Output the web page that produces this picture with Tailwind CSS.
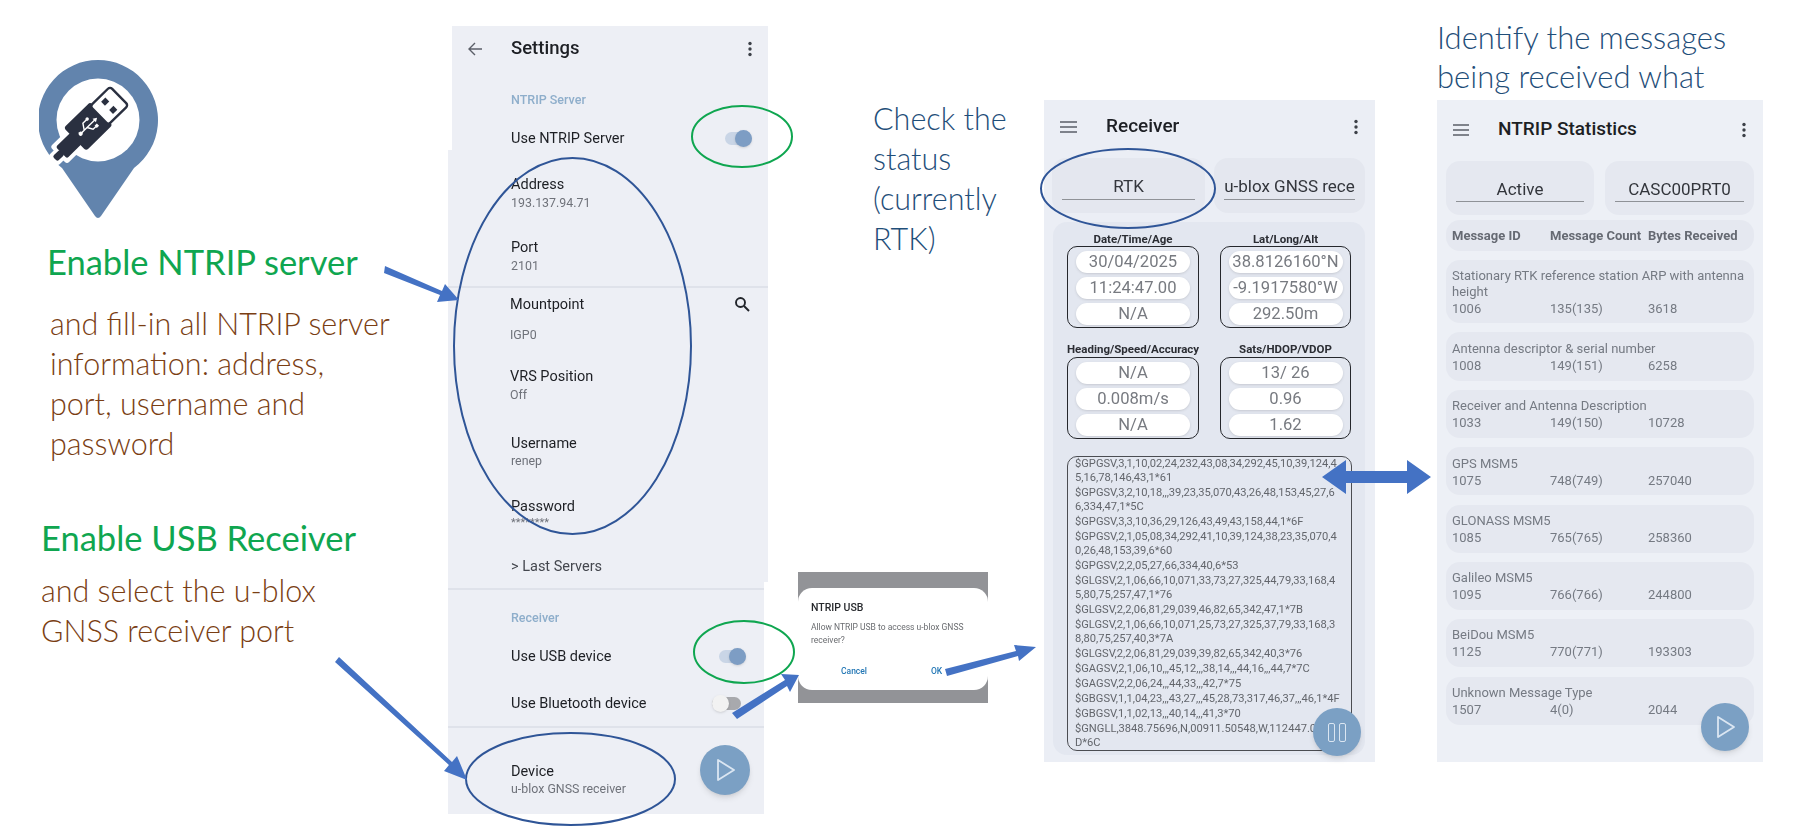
<!DOCTYPE html>
<html>
<head>
<meta charset="utf-8">
<script src="https://cdn.jsdelivr.net/npm/@tailwindcss/browser@4"></script>
</head>
<body class="bg-white">
<div class="relative w-[1794px] h-[830px] overflow-hidden bg-white font-[Roboto]">

  <!-- Logo -->
  <svg class="absolute left-[39px] top-[58px] w-[120px] h-[162px]" viewBox="39 58 120 162">
    <path d="M62 168 A60 60 0 1 1 134 168 L101 216 Q98 220 95 216 Z" fill="#6284ad"/>
    <circle cx="98" cy="120" r="41.5" fill="#fff"/>
    <g transform="translate(55 159) rotate(-44.5)">
      <path d="M0 -4 H10 V4 H0 Z M8 -9 H30 V9 H8 Z" fill="#fff" stroke="#fff" stroke-width="6" stroke-linejoin="round"/>
      <rect x="0" y="-3.5" width="10" height="7" rx="2" fill="#2a3040"/>
      <rect x="9" y="-8" width="21" height="16" rx="2" fill="#2a3040"/>
      <rect x="28" y="-16" width="37" height="32" rx="3" fill="#2a3040"/>
      <rect x="62" y="-13" width="28" height="26" rx="3" fill="#fff" stroke="#2a3040" stroke-width="2.4"/>
      <rect x="73" y="-8.5" width="6" height="5.5" fill="#2a3040"/>
      <rect x="73" y="3" width="6" height="5.5" fill="#2a3040"/>
      <g stroke="#fff" stroke-width="1.4" fill="none">
        <path d="M36 0 H56 M41 0 L45 -6 H50 M45 0 L48 5.5 H52"/>
      </g>
      <circle cx="36" cy="0" r="2.1" fill="#fff"/>
      <circle cx="51" cy="-6" r="1.7" fill="#fff"/>
      <rect x="51.5" y="4" width="3.2" height="3.2" fill="#fff"/>
      <path d="M55 -2.4 L59 0 L55 2.4 Z" fill="#fff"/>
    </g>
  </svg>

  <!-- Annotations -->
  <div class="absolute left-[47px] top-[240px] font-[Lato] text-[#0fa650] text-[34.5px] leading-[44px] whitespace-nowrap">Enable NTRIP server</div>
  <div class="absolute left-[50px] top-[303px] font-[Lato] font-light text-[#7a3e13] text-[30.5px] leading-[40px] whitespace-nowrap">and fill-in all NTRIP server<br>information: address,<br>port, username and<br>password</div>
  <div class="absolute left-[41px] top-[516px] font-[Lato] text-[#0fa650] text-[34.5px] leading-[44px] whitespace-nowrap">Enable USB Receiver</div>
  <div class="absolute left-[41px] top-[570px] font-[Lato] font-light text-[#7a3e13] text-[30.5px] leading-[40px] whitespace-nowrap">and select the u-blox<br>GNSS receiver port</div>
  <div class="absolute left-[873px] top-[98px] font-[Lato] font-light text-[#1f4e79] text-[30.5px] leading-[40px] whitespace-nowrap">Check the<br>status<br>(currently<br>RTK)</div>
  <div class="absolute left-[1437px] top-[18px] font-[Lato] font-light text-[#1f4e79] text-[31px] leading-[39px] whitespace-nowrap">Identify the messages<br>being received what</div>

  <!-- Settings screenshot -->
  <div class="absolute left-[448px] top-[26px] w-[320px] text-[#1d1f24] blur-[0.3px]">
    <div class="ml-[4px] h-[124px] bg-[#edeff5]">
      <div class="h-[45px] flex items-center justify-between pl-[15px] pr-[15px]">
        <div class="flex items-center">
          <svg class="w-[16px] h-[16px]" viewBox="0 0 16 16" fill="none" stroke="#5b5f68" stroke-width="1.4"><path d="M15 8 H2 M8 2 L2 8 L8 14"/></svg>
          <span class="ml-[28px] text-[18.5px] font-medium">Settings</span>
        </div>
        <svg class="w-[6px] h-[16px]" viewBox="0 0 6 16" fill="#3c4048"><circle cx="3" cy="2.5" r="1.7"/><circle cx="3" cy="8" r="1.7"/><circle cx="3" cy="13.5" r="1.7"/></svg>
      </div>
      <div class="mt-[20px] h-[18px] pl-[59px] text-[12.5px] leading-[18px] font-medium text-[#8eaecb]">NTRIP Server</div>
      <div class="mt-[20px] h-[18px] pl-[59px] pr-[16px] flex items-center justify-between text-[14.5px] leading-[20px]">
        <span class="pt-[2px]">Use NTRIP Server</span>
        <span class="relative block w-[27px] h-[13px] rounded-full bg-[#c9d5e6]"><span class="absolute right-0 top-[-2px] block w-[17px] h-[17px] rounded-full bg-[#7d9dc4] shadow-sm"></span></span>
      </div>
    </div>
    <div class="h-[432px] bg-[#edeff5] pl-[63px] pt-[25px]">
      <div class="h-[18px] text-[14.5px] leading-[20px]">Address</div>
      <div class="mt-[1px] h-[18px] text-[12.4px] leading-[18px] text-[#6f727a]">193.137.94.71</div>
      <div class="mt-[26px] h-[18px] text-[14.5px] leading-[20px]">Port</div>
      <div class="mt-[1px] h-[18px] text-[12.4px] leading-[18px] text-[#6f727a]">2101</div>
      <div class="mt-[11px] -ml-[63px] h-[2px] bg-[#dfe2ea]"></div>
      <div class="mt-[7px] -ml-[1px] pr-[18px] h-[18px] flex items-center justify-between text-[14.5px] leading-[20px]">
        <span class="pt-[2px]">Mountpoint</span>
        <svg class="w-[16px] h-[16px]" viewBox="0 0 16 16" fill="none" stroke="#22252b" stroke-width="1.9"><circle cx="6.5" cy="6.5" r="4.5"/><path d="M10 10 L15 15"/></svg>
      </div>
      <div class="mt-[13px] -ml-[1px] h-[18px] text-[12.4px] leading-[18px] text-[#6f727a]">IGP0</div>
      <div class="mt-[23px] -ml-[1px] h-[18px] text-[14.5px] leading-[20px]">VRS Position</div>
      <div class="mt-[1px] -ml-[1px] h-[18px] text-[12.4px] leading-[18px] text-[#6f727a]">Off</div>
      <div class="mt-[30px] h-[18px] text-[14.5px] leading-[20px]">Username</div>
      <div class="h-[18px] text-[12.4px] leading-[18px] text-[#6f727a]">renep</div>
      <div class="mt-[27px] h-[18px] text-[14.5px] leading-[20px]">Password</div>
      <div class="h-[16px] text-[11px] leading-[16px] text-[#6f727a]">********</div>
      <div class="mt-[26px] h-[18px] text-[14.5px] leading-[20px] text-[#44474e]">&gt; Last Servers</div>
    </div>
    <div class="relative w-[316px] h-[232px] bg-[#edeff5] pt-[6px]">
      <div class="h-[2px] bg-[#dfe2ea]"></div>
      <div class="mt-[18px] ml-[63px] h-[18px] text-[12.5px] leading-[20px] font-medium text-[#8eaecb]">Receiver</div>
      <div class="mt-[21px] pl-[63px] pr-[16px] h-[18px] flex items-center justify-between text-[14.5px] leading-[20px]">
        <span class="pt-[2px]">Use USB device</span>
        <span class="relative block w-[27px] h-[13px] mr-[2px] rounded-full bg-[#c9d5e6]"><span class="absolute right-0 top-[-2px] block w-[17px] h-[17px] rounded-full bg-[#7d9dc4] shadow-sm"></span></span>
      </div>
      <div class="mt-[29px] pl-[63px] pr-[16px] h-[18px] flex items-center justify-between text-[14.5px] leading-[20px]">
        <span class="pt-[2px]">Use Bluetooth device</span>
        <span class="relative block w-[29px] h-[13px] mr-[7px] rounded-full bg-[#a8a9ad]"><span class="absolute left-0 top-[-2px] block w-[17px] h-[17px] rounded-full bg-[#f2f2f2] shadow-sm"></span></span>
      </div>
      <div class="mt-[14px] h-[2px] bg-[#dfe2ea]"></div>
      <div class="mt-[34px] ml-[63px] h-[18px] text-[14.5px] leading-[20px]">Device</div>
      <div class="ml-[63px] h-[18px] text-[12.4px] leading-[18px] text-[#6f727a]">u-blox GNSS receiver</div>
      <div class="absolute left-[252px] top-[163px] w-[50px] h-[50px] rounded-full bg-[#7ba0c4] shadow-md flex items-center justify-center">
        <svg class="w-[20px] h-[24px] ml-[1px]" viewBox="0 0 20 24" fill="none" stroke="#dbe6f2" stroke-width="1.8"><path d="M2 2 L18 12 L2 22 Z" stroke-linejoin="round"/></svg>
      </div>
    </div>
  </div>

  <!-- USB permission dialog -->
  <div class="absolute left-[798px] top-[572px] w-[190px] h-[131px] bg-[#929397] pt-[16px] blur-[0.3px]">
    <div class="h-[102px] bg-white rounded-[14px] pl-[13px] pt-[12px]">
      <div class="text-[10.5px] leading-[16px] font-medium text-[#26282c]">NTRIP USB</div>
      <div class="mt-[5px] text-[8.5px] leading-[13px] text-[#6a6c70]">Allow NTRIP USB to access u-blox GNSS<br>receiver?</div>
      <div class="mt-[18px] flex text-[8.5px] leading-[12px] font-medium text-[#2377b5]">
        <span class="ml-[30px] w-[90px]">Cancel</span>
        <span>OK</span>
      </div>
    </div>
  </div>

  <!-- Receiver screenshot -->
  <div class="absolute left-[1044px] top-[100px] w-[331px] h-[662px] bg-[#ebeef5] blur-[0.3px]">
    <div class="h-[53px] flex items-center justify-between pl-[16px] pr-[16px]">
      <div class="flex items-center">
        <svg class="w-[17px] h-[12px]" viewBox="0 0 17 12" stroke="#5b5f68" stroke-width="1.3"><path d="M0 1 H17 M0 6 H17 M0 11 H17"/></svg>
        <span class="ml-[29px] text-[19px] font-medium text-[#1d1f24]">Receiver</span>
      </div>
      <svg class="w-[6px] h-[16px]" viewBox="0 0 6 16" fill="#3c4048"><circle cx="3" cy="2.5" r="1.7"/><circle cx="3" cy="8" r="1.7"/><circle cx="3" cy="13.5" r="1.7"/></svg>
    </div>
    <div class="mt-[5px] pl-[8px] flex gap-[9px]">
      <div class="w-[153px] h-[55px] rounded-[14px] bg-[#e4e7ef] pt-[17px] px-[10px]">
        <div class="h-[24px] border-b border-[#8f9297] box-content text-center text-[17px] leading-[22px] text-[#33363c]">RTK</div>
      </div>
      <div class="w-[151px] h-[55px] rounded-[14px] bg-[#e4e7ef] pt-[17px] px-[10px]">
        <div class="h-[24px] border-b border-[#8f9297] box-content text-center text-[17px] leading-[22px] text-[#33363c] whitespace-nowrap overflow-hidden">u-blox GNSS rece</div>
      </div>
    </div>
    <div class="mt-[9px] ml-[9px] w-[312px] h-[533px] rounded-[14px] bg-[#e3e7f0] pl-[14px] pt-[10px]">
      <div class="grid grid-cols-[132px_131px] gap-x-[21px]">
        <div>
          <div class="h-[14px] text-center text-[11.5px] leading-[15px] font-bold text-[#2b2d33]">Date/Time/Age</div>
          <div class="h-[82px] border border-[#25272c] rounded-[10px] pt-[4px] flex flex-col items-center gap-[4px]">
            <div class="w-[114px] h-[22px] rounded-full bg-white shadow-sm text-center text-[16.6px] leading-[22px] text-[#777a80]">30/04/2025</div>
            <div class="w-[114px] h-[22px] rounded-full bg-white shadow-sm text-center text-[16.6px] leading-[22px] text-[#777a80]">11:24:47.00</div>
            <div class="w-[114px] h-[22px] rounded-full bg-white shadow-sm text-center text-[16.6px] leading-[22px] text-[#777a80]">N/A</div>
          </div>
        </div>
        <div>
          <div class="h-[14px] text-center text-[11.5px] leading-[15px] font-bold text-[#2b2d33]">Lat/Long/Alt</div>
          <div class="h-[82px] border border-[#25272c] rounded-[10px] pt-[4px] flex flex-col items-center gap-[4px]">
            <div class="w-[114px] h-[22px] rounded-full bg-white shadow-sm text-center text-[16.6px] leading-[22px] text-[#777a80] whitespace-nowrap">38.8126160°N</div>
            <div class="w-[114px] h-[22px] rounded-full bg-white shadow-sm text-center text-[16.6px] leading-[22px] text-[#777a80] whitespace-nowrap">-9.1917580°W</div>
            <div class="w-[114px] h-[22px] rounded-full bg-white shadow-sm text-center text-[16.6px] leading-[22px] text-[#777a80]">292.50m</div>
          </div>
        </div>
      </div>
      <div class="mt-[14px] grid grid-cols-[132px_131px] gap-x-[21px]">
        <div>
          <div class="h-[15px] text-center text-[11.5px] leading-[15px] font-bold text-[#2b2d33] whitespace-nowrap">Heading/Speed/Accuracy</div>
          <div class="h-[82px] border border-[#25272c] rounded-[10px] pt-[4px] flex flex-col items-center gap-[4px]">
            <div class="w-[114px] h-[22px] rounded-full bg-white shadow-sm text-center text-[16.6px] leading-[22px] text-[#777a80]">N/A</div>
            <div class="w-[114px] h-[22px] rounded-full bg-white shadow-sm text-center text-[16.6px] leading-[22px] text-[#777a80]">0.008m/s</div>
            <div class="w-[114px] h-[22px] rounded-full bg-white shadow-sm text-center text-[16.6px] leading-[22px] text-[#777a80]">N/A</div>
          </div>
        </div>
        <div>
          <div class="h-[15px] text-center text-[11.5px] leading-[15px] font-bold text-[#2b2d33]">Sats/HDOP/VDOP</div>
          <div class="h-[82px] border border-[#25272c] rounded-[10px] pt-[4px] flex flex-col items-center gap-[4px]">
            <div class="w-[114px] h-[22px] rounded-full bg-white shadow-sm text-center text-[16.6px] leading-[22px] text-[#777a80]">13/ 26</div>
            <div class="w-[114px] h-[22px] rounded-full bg-white shadow-sm text-center text-[16.6px] leading-[22px] text-[#777a80]">0.96</div>
            <div class="w-[114px] h-[22px] rounded-full bg-white shadow-sm text-center text-[16.6px] leading-[22px] text-[#777a80]">1.62</div>
          </div>
        </div>
      </div>
      <div class="mt-[17px] w-[285px] h-[295px] border border-[#4b4d52] rounded-[10px] overflow-hidden pl-[7px] text-[11.15px] leading-[14px] text-[#63666c] whitespace-nowrap flex flex-col gap-[1px]">
        <p>$GPGSV,3,1,10,02,24,232,43,08,34,292,45,10,39,124,4<br>5,16,78,146,43,1*61</p>
        <p>$GPGSV,3,2,10,18,,,39,23,35,070,43,26,48,153,45,27,6<br>6,334,47,1*5C</p>
        <p>$GPGSV,3,3,10,36,29,126,43,49,43,158,44,1*6F</p>
        <p>$GPGSV,2,1,05,08,34,292,41,10,39,124,38,23,35,070,4<br>0,26,48,153,39,6*60</p>
        <p>$GPGSV,2,2,05,27,66,334,40,6*53</p>
        <p>$GLGSV,2,1,06,66,10,071,33,73,27,325,44,79,33,168,4<br>5,80,75,257,47,1*76</p>
        <p>$GLGSV,2,2,06,81,29,039,46,82,65,342,47,1*7B</p>
        <p>$GLGSV,2,1,06,66,10,071,25,73,27,325,37,79,33,168,3<br>8,80,75,257,40,3*7A</p>
        <p>$GLGSV,2,2,06,81,29,039,39,82,65,342,40,3*76</p>
        <p>$GAGSV,2,1,06,10,,,45,12,,,38,14,,,44,16,,,44,7*7C</p>
        <p>$GAGSV,2,2,06,24,,,44,33,,,42,7*75</p>
        <p>$GBGSV,1,1,04,23,,,43,27,,,45,28,73,317,46,37,,,46,1*4F</p>
        <p>$GBGSV,1,1,02,13,,,40,14,,,41,3*70</p>
        <p>$GNGLL,3848.75696,N,00911.50548,W,112447.00,A,<br>D*6C</p>
      </div>
    </div>
    <div class="absolute left-[269px] top-[608px] w-[48px] h-[48px] rounded-full bg-[#7ba0c4] shadow-md flex items-center justify-center gap-[4px]">
      <span class="block w-[7px] h-[19px] border-[1.5px] border-[#dbe6f2] rounded-[2px]"></span>
      <span class="block w-[7px] h-[19px] border-[1.5px] border-[#dbe6f2] rounded-[2px]"></span>
    </div>
  </div>

  <!-- NTRIP Statistics screenshot -->
  <div class="absolute left-[1437px] top-[100px] w-[326px] h-[662px] bg-[#edf0f6] blur-[0.3px]">
    <div class="h-[59px] flex items-center justify-between pl-[16px] pr-[16px]">
      <div class="flex items-center">
        <svg class="w-[16px] h-[12px]" viewBox="0 0 16 12" stroke="#5b5f68" stroke-width="1.3"><path d="M0 1 H16 M0 6 H16 M0 11 H16"/></svg>
        <span class="ml-[29px] text-[19px] font-medium text-[#1d1f24]">NTRIP Statistics</span>
      </div>
      <svg class="w-[6px] h-[16px]" viewBox="0 0 6 16" fill="#3c4048"><circle cx="3" cy="2.5" r="1.7"/><circle cx="3" cy="8" r="1.7"/><circle cx="3" cy="13.5" r="1.7"/></svg>
    </div>
    <div class="mt-[2px] pl-[9px] flex gap-[11px]">
      <div class="w-[148px] h-[54px] rounded-[14px] bg-[#e5e8f0] pt-[16px] px-[10px]">
        <div class="h-[24px] border-b border-[#8f9297] box-content text-center text-[17px] leading-[24px] text-[#33363c]">Active</div>
      </div>
      <div class="w-[149px] h-[54px] rounded-[14px] bg-[#e5e8f0] pt-[16px] px-[10px]">
        <div class="h-[24px] border-b border-[#8f9297] box-content text-center text-[17px] leading-[24px] text-[#33363c]">CASC00PRT0</div>
      </div>
    </div>
    <div class="mx-[9px] mt-[5px] flex flex-col text-[13px] text-[#757a83]">
      <div class="h-[31px] rounded-[14px] bg-[#e5e8f0] pl-[6px] pt-[1px] grid grid-cols-[98px_98px_1fr] items-center font-bold text-[13px] text-[#666a73] whitespace-nowrap">
        <span>Message ID</span><span>Message Count</span><span>Bytes Received</span>
      </div>
      <div class="mt-[9px] h-[63px] rounded-[14px] bg-[#e5e8f0] pl-[6px] pt-[8px] leading-[16px]">
        <div class="whitespace-nowrap">Stationary RTK reference station ARP with antenna<br>height</div>
        <div class="grid grid-cols-[98px_98px_1fr] leading-[16px] mt-[1px]"><span>1006</span><span>135(135)</span><span>3618</span></div>
      </div>
      <div class="mt-[9px] h-[49px] rounded-[14px] bg-[#e5e8f0] pl-[6px] pt-[9px] leading-[16px]">
        <div>Antenna descriptor &amp; serial number</div>
        <div class="grid grid-cols-[98px_98px_1fr] mt-[1px]"><span>1008</span><span>149(151)</span><span>6258</span></div>
      </div>
      <div class="mt-[9px] h-[48px] rounded-[14px] bg-[#e5e8f0] pl-[6px] pt-[8px] leading-[16px]">
        <div>Receiver and Antenna Description</div>
        <div class="grid grid-cols-[98px_98px_1fr] mt-[1px]"><span>1033</span><span>149(150)</span><span>10728</span></div>
      </div>
      <div class="mt-[9px] h-[48px] rounded-[14px] bg-[#e5e8f0] pl-[6px] pt-[9px] leading-[16px]">
        <div>GPS MSM5</div>
        <div class="grid grid-cols-[98px_98px_1fr] mt-[1px]"><span>1075</span><span>748(749)</span><span>257040</span></div>
      </div>
      <div class="mt-[10px] h-[48px] rounded-[14px] bg-[#e5e8f0] pl-[6px] pt-[8px] leading-[16px]">
        <div>GLONASS MSM5</div>
        <div class="grid grid-cols-[98px_98px_1fr] mt-[1px]"><span>1085</span><span>765(765)</span><span>258360</span></div>
      </div>
      <div class="mt-[9px] h-[48px] rounded-[14px] bg-[#e5e8f0] pl-[6px] pt-[8px] leading-[16px]">
        <div>Galileo MSM5</div>
        <div class="grid grid-cols-[98px_98px_1fr] mt-[1px]"><span>1095</span><span>766(766)</span><span>244800</span></div>
      </div>
      <div class="mt-[9px] h-[48px] rounded-[14px] bg-[#e5e8f0] pl-[6px] pt-[8px] leading-[16px]">
        <div>BeiDou MSM5</div>
        <div class="grid grid-cols-[98px_98px_1fr] mt-[1px]"><span>1125</span><span>770(771)</span><span>193303</span></div>
      </div>
      <div class="mt-[10px] h-[48px] rounded-[14px] bg-[#e5e8f0] pl-[6px] pt-[8px] leading-[16px]">
        <div>Unknown Message Type</div>
        <div class="grid grid-cols-[98px_98px_1fr] mt-[1px]"><span>1507</span><span>4(0)</span><span>2044</span></div>
      </div>
    </div>
    <div class="absolute left-[264px] top-[603px] w-[48px] h-[48px] rounded-full bg-[#7ba0c4] shadow-md flex items-center justify-center">
      <svg class="w-[20px] h-[24px] ml-[2px]" viewBox="0 0 20 24" fill="none" stroke="#dbe6f2" stroke-width="1.8"><path d="M2 2 L18 12 L2 22 Z" stroke-linejoin="round"/></svg>
    </div>
  </div>

  <!-- Slide overlay: ellipses and arrows -->
  <svg class="absolute left-0 top-0 w-[1794px] h-[830px] pointer-events-none" viewBox="0 0 1794 830" fill="none">
    <ellipse cx="572.5" cy="346" rx="118.5" ry="188" stroke="#2f5597" stroke-width="2"/>
    <ellipse cx="570.5" cy="779" rx="104.5" ry="46" stroke="#2f5597" stroke-width="2"/>
    <ellipse cx="1128" cy="188.5" rx="87" ry="39.5" stroke="#2f5597" stroke-width="2"/>
    <ellipse cx="742" cy="136.5" rx="50" ry="30.5" stroke="#0fa650" stroke-width="2"/>
    <ellipse cx="744" cy="652" rx="50" ry="31" stroke="#0fa650" stroke-width="2"/>
    <g fill="#4472c4">
      <path d="M385 266 L442 291 L445 284 L459 300 L437 302 L440 295 L384 273 Z"/>
      <path d="M335 662 L339 657 L452 762 L457 756 L467 780 L444 771 L449 765 Z"/>
      <path d="M732 713 L785 680 L781 674 L799 675 L790 692 L787 686 L737 719 Z"/>
      <path d="M945 669 L1016 651 L1014 645 L1036 647 L1019 661 L1018 656 L947 676 Z"/>
      <path d="M1322 477 L1346 460 L1346 471 L1407 471 L1407 460 L1431 477 L1407 494 L1407 483 L1346 483 L1346 494 Z"/>
    </g>
  </svg>
</div>
</body>
</html>
